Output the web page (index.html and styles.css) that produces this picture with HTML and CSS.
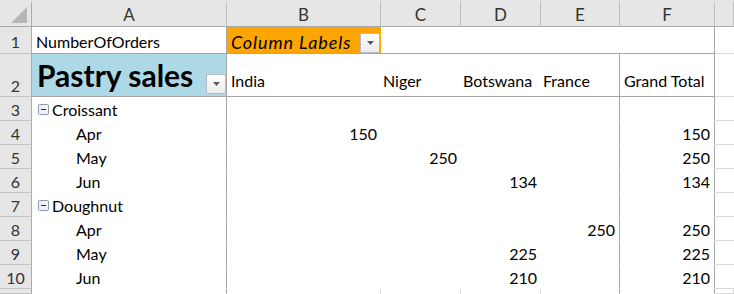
FILE: index.html
```html
<!DOCTYPE html>
<html>
<head>
	<title>Pastry sales</title>
	<link rel="stylesheet" href="styles.css">
</head>
<body>
	<div class="sheet">
		<div class="row head">
			<div class="corner"><svg width="17" height="17" viewBox="0 0 17 17"><path d="M0 16H16V0z" fill="#b6b6b6"/></svg></div>
			<div>A</div>
			<div>B</div>
			<div>C</div>
			<div>D</div>
			<div>E</div>
			<div>F</div>
			<div></div>
		</div>

		<div class="row r1">
			<div class="rh">1</div>
			<div class="rb bb">NumberOfOrders</div>
			<div class="lab bb"><i>Column Labels</i><span class="dd"><svg width="7" height="4" viewBox="0 0 7 4"><path d="M0 0H7L3.5 4z" fill="#5a5a5a"/></svg></span></div>
			<div class="bb"></div>
			<div class="bb"></div>
			<div class="bb"></div>
			<div class="rb bb"></div>
			<div class="gl"></div>
		</div>

		<div class="row r2">
			<div class="rh">2</div>
			<div class="title rb bb"><b>Pastry sales</b><span class="dd"><svg width="7" height="4" viewBox="0 0 7 4"><path d="M0 0H7L3.5 4z" fill="#5a5a5a"/></svg></span></div>
			<div class="bb"><span>India</span></div>
			<div class="bb tight"><span>Niger</span></div>
			<div class="bb tight"><span>Botswana</span></div>
			<div class="rb bb tight"><span>France</span></div>
			<div class="rb bb"><span>Grand Total</span></div>
			<div class="gl"></div>
		</div>

		<div class="row">
			<div class="rh">3</div>
			<div class="rb"><svg class="tog" width="11" height="11" viewBox="0 0 11 11"><rect x=".5" y=".5" width="10" height="10" rx="1" fill="#eef1f6" stroke="#8d99a8"/><path d="M3 5.5H8" stroke="#333"/></svg>Croissant</div>
			<div></div><div></div><div></div>
			<div class="rb"></div>
			<div class="rb"></div>
			<div class="gl"></div>
		</div>
		<div class="row">
			<div class="rh">4</div>
			<div class="rb sub">Apr</div>
			<div class="num">150</div><div></div><div></div>
			<div class="rb"></div>
			<div class="rb num">150</div>
			<div class="gl"></div>
		</div>
		<div class="row">
			<div class="rh">5</div>
			<div class="rb sub">May</div>
			<div></div><div class="num">250</div><div></div>
			<div class="rb"></div>
			<div class="rb num">250</div>
			<div class="gl"></div>
		</div>
		<div class="row">
			<div class="rh">6</div>
			<div class="rb sub">Jun</div>
			<div></div><div></div><div class="num">134</div>
			<div class="rb"></div>
			<div class="rb num">134</div>
			<div class="gl"></div>
		</div>
		<div class="row">
			<div class="rh">7</div>
			<div class="rb"><svg class="tog" width="11" height="11" viewBox="0 0 11 11"><rect x=".5" y=".5" width="10" height="10" rx="1" fill="#eef1f6" stroke="#8d99a8"/><path d="M3 5.5H8" stroke="#333"/></svg>Doughnut</div>
			<div></div><div></div><div></div>
			<div class="rb"></div>
			<div class="rb"></div>
			<div class="gl"></div>
		</div>
		<div class="row">
			<div class="rh">8</div>
			<div class="rb sub">Apr</div>
			<div></div><div></div><div></div>
			<div class="rb num">250</div>
			<div class="rb num">250</div>
			<div class="gl"></div>
		</div>
		<div class="row">
			<div class="rh">9</div>
			<div class="rb sub">May</div>
			<div></div><div></div><div class="num">225</div>
			<div class="rb"></div>
			<div class="rb num">225</div>
			<div class="gl"></div>
		</div>
		<div class="row">
			<div class="rh">10</div>
			<div class="rb sub">Jun</div>
			<div></div><div></div><div class="num">210</div>
			<div class="rb"></div>
			<div class="rb num">210</div>
			<div class="gl"></div>
		</div>

		<!-- next row, only its top edge is in view -->
		<div class="row last">
			<div class="rh"></div>
			<div class="rb"></div>
			<div></div><div></div><div></div>
			<div class="rb"></div>
			<div class="rb"></div>
			<div class="gl"></div>
		</div>
	</div>
</body>
</html>
```

FILE: styles.css
```css
body {
	margin: 0;
	background-color: #fff;
	font-family: Lato, "Open Sans", sans-serif;
	font-size: 16px;
	color: #000;
}
.sheet {
	display: grid;
	grid-template-columns: 32px 195px 154px 80px 80px 79px 95px 1fr;
	grid-template-rows: 27px 27px 43px repeat(8, 24px) 1fr;
	width: 734px;
	height: 294px;
	overflow: hidden;
}
.row {
	display: contents;
}
.row > div {
	box-sizing: border-box;
	display: flex;
	align-items: flex-end;
	padding: 0 4px;
	line-height: 20px;
	white-space: nowrap;
	border-bottom: 1px solid transparent;
}

/* column letters */
.head > div {
	justify-content: center;
	align-items: center;
	background-color: #e6e6e6;
	border-top: 4px solid #e6e6e6;
	border-right: 1px solid #bcbcbc;
	border-bottom: 1px solid #ababab;
	color: #333;
	font-size: 17px;
}
.head > .corner {
	justify-content: flex-end;
	align-items: flex-end;
	padding: 0 3px 2px 0;
	border-right-color: #ababab;
}

/* row numbers */
.row > .rh {
	justify-content: center;
	background-color: #e6e6e6;
	border-right: 1px solid #ababab;
	border-bottom: 1px solid #c4c4c4;
	color: #333;
}

/* pivot borders and plain gridlines */
.row > .rb {
	border-right: 1px solid #a6a6a6;
}
.row > .bb {
	border-bottom: 1px solid #a6a6a6;
}
.row > .gl {
	border-bottom: 1px solid #d9d9d9;
}
.last > div {
	border-right: 1px solid #d9d9d9;
}

.r1 > div {
	padding-bottom: 1px;
}
.r2 > div > span {
	margin-bottom: 5px;
}
.r2 > .tight {
	padding-left: 2px;
}

.lab {
	justify-content: space-between;
	background-color: #ffa500;
	padding-right: 1px !important;
	padding-bottom: 0 !important;
}
.lab i {
	font-size: 18px;
	letter-spacing: 0.9px;
	margin-bottom: 1px;
}
.title {
	justify-content: space-between;
	background-color: #add8e6;
	padding-right: 0 !important;
}
.title b {
	font-size: 30px;
	line-height: 34px;
	margin-bottom: 4px;
	margin-left: 1px;
}
.title .dd {
	margin-bottom: 2px;
}

.dd {
	display: flex;
	align-items: center;
	justify-content: center;
	box-sizing: border-box;
	width: 20px;
	height: 20px;
	border: 1px solid #b7bcc4;
	background: linear-gradient(#fff, #ebebeb);
}

.tog {
	flex: none;
	margin: 0 3px 5px 2px;
}
.row > .sub {
	padding-left: 44px;
}
.row > .num {
	justify-content: flex-end;
	padding-right: 4px;
}
```
